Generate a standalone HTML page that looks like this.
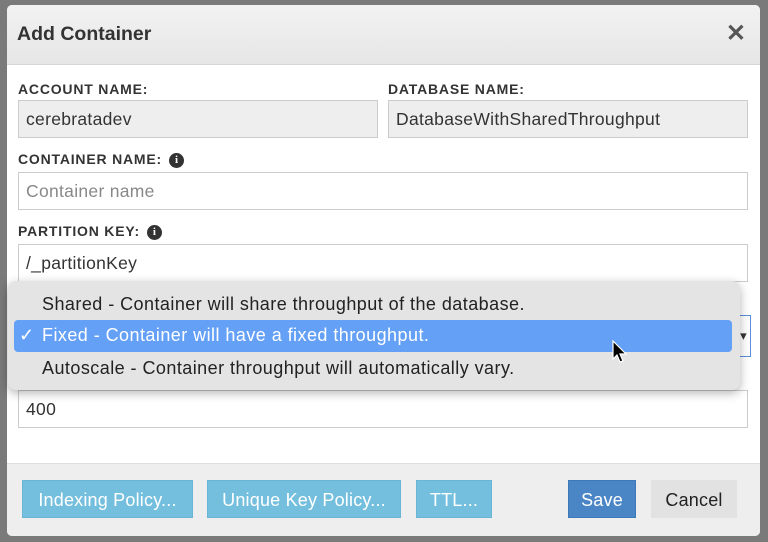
<!DOCTYPE html>
<html><head><style>
*{box-sizing:border-box;margin:0;padding:0}
body{width:768px;height:542px;background:#7a7a7a;font-family:"Liberation Sans",sans-serif;position:relative;overflow:hidden}
.dlg{position:absolute;left:7px;top:5px;width:753px;height:531px;background:#fff;border-radius:5px;overflow:hidden}
.hdr{position:absolute;left:0;top:0;width:100%;height:60px;background:linear-gradient(#f2f2f2,#e6e6e6);border-bottom:1px solid #d6d6d6}
.hdr h1{position:absolute;left:10px;top:18px;font-size:19.5px;font-weight:bold;color:#333}
.x{position:absolute;right:14px;top:14px;font-size:24px;color:#555;font-weight:bold}
.lbl{position:absolute;font-size:14px;font-weight:bold;color:#333;letter-spacing:.8px}
.inp{position:absolute;height:38px;border:1px solid #ccc;font-size:17.5px;letter-spacing:.3px;color:#333;padding:8px 7px;background:#fff}
.ro{background:#eee}
.info{display:inline-block;width:15px;height:15px;border-radius:50%;background:#333;color:#fff;font-size:11px;text-align:center;line-height:15px;font-family:"Liberation Serif",serif;font-weight:bold;vertical-align:1px;margin-left:7px;letter-spacing:0}
.ftr{position:absolute;left:0;top:458px;width:100%;height:73px;background:#eee;border-top:1px solid #ddd}
.btn{position:absolute;top:475px;height:38px;font-size:18px;letter-spacing:.2px;color:#fff;text-align:center;line-height:38px;background:#75bfde;border:1px solid #6ab4d4}
.dd{position:absolute;left:8px;top:281px;width:732px;height:109px;background:#e4e4e4;border-radius:8px;box-shadow:0 3px 10px rgba(0,0,0,.3);font-size:18px;letter-spacing:.45px;color:#222}
.dd div{position:absolute;left:34px}
.sel{position:absolute;left:6px!important;top:39px;width:718px;height:32px;background:#64a0f6;border-radius:4px;color:#fff;padding:5px 0 0 28px}
.sel span{position:absolute;left:5px;top:5px}
</style></head><body>
<div class="dlg">
<div class="hdr"><h1>Add Container</h1><div class="x">✕</div></div>
<div class="lbl" style="left:11px;top:76px">ACCOUNT NAME:</div>
<div class="lbl" style="left:381px;top:76px">DATABASE NAME:</div>
<div class="inp ro" style="left:11px;top:95px;width:360px">cerebratadev</div>
<div class="inp ro" style="left:381px;top:95px;width:360px">DatabaseWithSharedThroughput</div>
<div class="lbl" style="left:11px;top:146px">CONTAINER NAME:<span class="info">i</span></div>
<div class="inp" style="left:11px;top:167px;width:730px;color:#888">Container name</div>
<div class="lbl" style="left:11px;top:218px">PARTITION KEY:<span class="info">i</span></div>
<div class="inp" style="left:11px;top:239px;width:730px">/_partitionKey</div>
<div class="inp" style="left:11px;top:310px;width:733px;height:42px;border:1px solid #5b8fd6;font-size:13px;text-align:right;padding-top:12px;padding-right:3px">▾</div>
<div class="inp" style="left:11px;top:385px;width:730px">400</div>
<div class="ftr"></div>
<div class="btn" style="left:15px;width:171px">Indexing Policy...</div>
<div class="btn" style="left:200px;width:194px">Unique Key Policy...</div>
<div class="btn" style="left:409px;width:76px">TTL...</div>
<div class="btn" style="left:561px;width:68px;background:#4a86c6;border-color:#3d78b8">Save</div>
<div class="btn" style="left:644px;width:86px;background:#e2e2e2;border-color:#e2e2e2;color:#222">Cancel</div>
</div>
<div class="dd">
<div style="top:13px">Shared - Container will share throughput of the database.</div>
<div class="sel"><span>✓</span>Fixed - Container will have a fixed throughput.</div>
<div style="top:77px">Autoscale - Container throughput will automatically vary.</div>
</div>
<svg style="position:absolute;left:612px;top:340px" width="16" height="26" viewBox="0 0 16 26"><path d="M1 1 L1 19 L5 15 L8 22 L11 21 L8 14 L14 14 Z" fill="#000" stroke="#fff" stroke-width="1.2"/></svg>
</body></html>
